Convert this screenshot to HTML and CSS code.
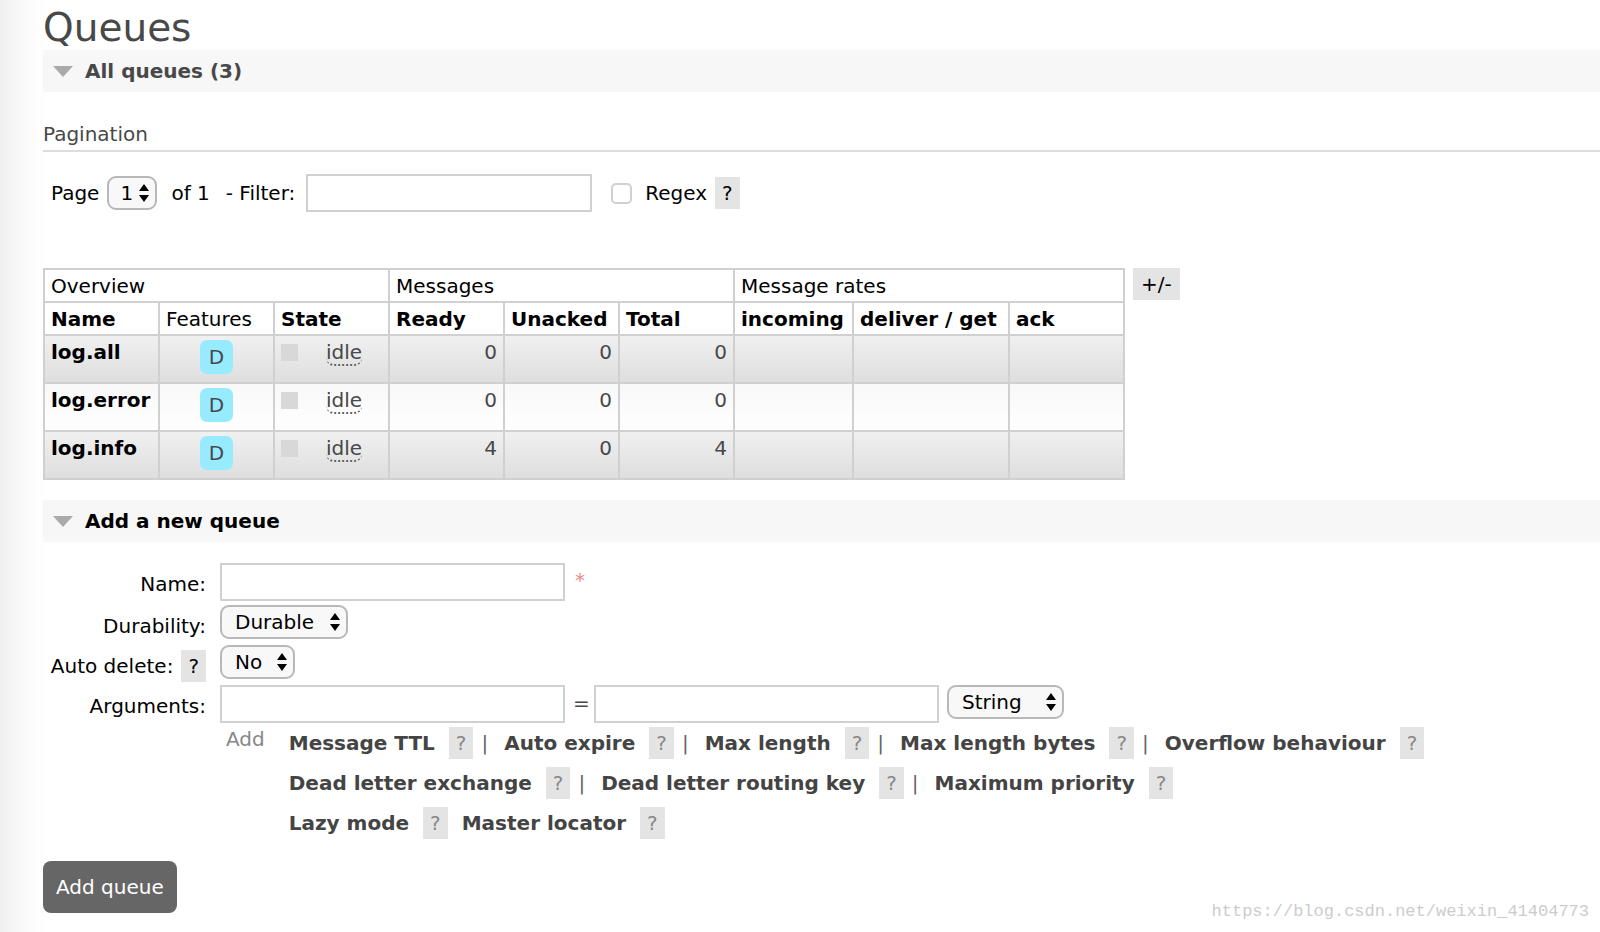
FILE: index.html
```html
<!DOCTYPE html>
<html lang="en">
	<head>
		<meta charset="utf-8">
		<title>Queues</title>
		<link rel="stylesheet" href="styles.css">
	</head>
	<body>
		<div class="main">
			<h1>Queues</h1>

			<h2 class="section"><svg class="tri" viewBox="0 0 20 11"><path d="M0 0h20L10 11z"/></svg>All queues (3)</h2>

			<h3>Pagination</h3>
			<form class="filter">
				<label for="page">Page</label>
				<span class="select page">
					<select id="page"><option>1</option></select>
					<svg class="arrows" viewBox="0 0 10 18"><path d="M5 0l5 7H0zM5 18l5-7H0z"/></svg>
				</span>
				<span class="of">of 1</span>
				<label for="filter">- Filter:</label>
				<input type="text" id="filter" class="filter-text">
				<input type="checkbox" id="regex">
				<label for="regex">Regex</label>
				<button type="button" class="help">?</button>
			</form>

			<div class="list">
				<table>
					<thead>
						<tr>
							<th colspan="3">Overview</th>
							<th colspan="3">Messages</th>
							<th colspan="3">Message rates</th>
						</tr>
						<tr>
							<th class="sort">Name</th>
							<th>Features</th>
							<th class="sort">State</th>
							<th class="sort">Ready</th>
							<th class="sort">Unacked</th>
							<th class="sort">Total</th>
							<th class="sort rate">incoming</th>
							<th class="sort deliver">deliver / get</th>
							<th class="sort">ack</th>
						</tr>
					</thead>
					<tbody>
						<tr class="alt">
							<td><a href="#">log.all</a></td>
							<td class="c"><span class="tag">D</span></td>
							<td><div class="state"><i></i><abbr>idle</abbr></div></td>
							<td class="r">0</td>
							<td class="r">0</td>
							<td class="r">0</td>
							<td></td>
							<td></td>
							<td></td>
						</tr>
						<tr>
							<td><a href="#">log.error</a></td>
							<td class="c"><span class="tag">D</span></td>
							<td><div class="state"><i></i><abbr>idle</abbr></div></td>
							<td class="r">0</td>
							<td class="r">0</td>
							<td class="r">0</td>
							<td></td>
							<td></td>
							<td></td>
						</tr>
						<tr class="alt">
							<td><a href="#">log.info</a></td>
							<td class="c"><span class="tag">D</span></td>
							<td><div class="state"><i></i><abbr>idle</abbr></div></td>
							<td class="r">4</td>
							<td class="r">0</td>
							<td class="r">4</td>
							<td></td>
							<td></td>
							<td></td>
						</tr>
					</tbody>
				</table>
				<button type="button" class="help columns">+/-</button>
			</div>

			<h2 class="section dark"><svg class="tri" viewBox="0 0 20 11"><path d="M0 0h20L10 11z"/></svg>Add a new queue</h2>

			<form class="add">
				<div class="fields">
					<div class="label"><label for="name">Name:</label></div>
					<div class="value">
						<input type="text" id="name" class="text">
						<span class="mand">*</span>
					</div>

					<div class="label"><label for="durable">Durability:</label></div>
					<div class="value">
						<span class="select durable">
							<select id="durable"><option>Durable</option><option>Transient</option></select>
							<svg class="arrows" viewBox="0 0 10 18"><path d="M5 0l5 7H0zM5 18l5-7H0z"/></svg>
						</span>
					</div>

					<div class="label"><label for="auto">Auto delete:</label><button type="button" class="help">?</button></div>
					<div class="value">
						<span class="select auto">
							<select id="auto"><option>No</option><option>Yes</option></select>
							<svg class="arrows" viewBox="0 0 10 18"><path d="M5 0l5 7H0zM5 18l5-7H0z"/></svg>
						</span>
					</div>

					<div class="label"><label for="arg">Arguments:</label></div>
					<div class="value">
						<input type="text" id="arg" class="text">
						<span class="eq">=</span>
						<input type="text" class="text" aria-label="Argument value">
						<span class="select type">
							<select aria-label="Argument type"><option>String</option><option>Number</option><option>Boolean</option><option>List</option></select>
							<svg class="arrows" viewBox="0 0 10 18"><path d="M5 0l5 7H0zM5 18l5-7H0z"/></svg>
						</span>
					</div>

					<div class="args">
						<span class="add-word">Add</span>
						<div class="lines">
							<div class="line">
								<a href="#">Message TTL</a><button type="button" class="help">?</button><b>|</b>
								<a href="#">Auto expire</a><button type="button" class="help">?</button><b>|</b>
								<a href="#">Max length</a><button type="button" class="help">?</button><b>|</b>
								<a href="#">Max length bytes</a><button type="button" class="help">?</button><b>|</b>
								<a href="#">Overflow behaviour</a><button type="button" class="help">?</button>
							</div>
							<div class="line">
								<a href="#">Dead letter exchange</a><button type="button" class="help">?</button><b>|</b>
								<a href="#">Dead letter routing key</a><button type="button" class="help">?</button><b>|</b>
								<a href="#">Maximum priority</a><button type="button" class="help">?</button>
							</div>
							<div class="line">
								<a href="#">Lazy mode</a><button type="button" class="help">?</button>
								<a href="#">Master locator</a><button type="button" class="help">?</button>
							</div>
						</div>
					</div>
				</div>
				<button type="submit" class="submit">Add queue</button>
			</form>
		</div>
		<div class="mark">https://blog.csdn.net/weixin_41404773</div>
	</body>
</html>
```
FILE: styles.css
```css
*{
	box-sizing: border-box;
	margin: 0;
	padding: 0;
}
body{
	min-height: 100vh;
	font: 20px/24px "DejaVu Sans", Verdana, sans-serif;
	color: #484848;
	background: linear-gradient(to right, #efefef, #fafafa 24px, #fff 48px);
}
.main{
	padding: 6px 0 0 43px;
}
h1{
	font-size: 39px;
	font-weight: normal;
	line-height: 44px;
}
.section{
	display: flex;
	align-items: center;
	height: 42px;
	padding-left: 10px;
	gap: 12px;
	font-size: 20px;
	background: #f7f7f7;
}
.tri{
	width: 20px;
	height: 11px;
	fill: #aaa;
}
.dark{
	margin-top: 20px;
	color: #000;
}
h3{
	margin-top: 30px;
	padding-bottom: 4px;
	font-size: 20px;
	font-weight: normal;
	border-bottom: 2px solid #ddd;
}
input, select, button{
	font: inherit;
	color: #000;
}
input[type=text]{
	height: 38px;
	padding: 0 6px;
	border: 2px solid #d0d0d0;
	background: #fff;
}
.filter{
	display: flex;
	align-items: center;
	margin-top: 22px;
	padding-left: 8px;
	gap: 8px;
	color: #000;
}
.of{
	margin: 0 8px 0 6px;
}
.filter .filter-text{
	width: 286px;
	margin-left: 3px;
}
input[type=checkbox]{
	appearance: none;
	width: 21px;
	height: 21px;
	margin: 0 5px 0 11px;
	border: 2px solid #d0d0d0;
	border-radius: 5px;
	background: #fff;
}
.select{
	display: grid;
	height: 34px;
}
.select select{
	grid-area: 1 / 1;
	appearance: none;
	padding-left: 13px;
	border: 2px solid #b8b8b8;
	border-radius: 9px;
	background: #f8f8f8;
}
.arrows{
	grid-area: 1 / 1;
	align-self: center;
	justify-self: end;
	width: 10px;
	height: 18px;
	margin-right: 8px;
	pointer-events: none;
}
.page{
	width: 50px;
}
.page select{
	padding-left: 11px;
}
.durable{
	width: 128px;
}
.auto{
	width: 75px;
}
.type{
	width: 117px;
}
.help{
	flex: none;
	height: 32px;
	padding: 0 7px;
	border: 0;
	background: #e4e4e4;
}
.columns{
	padding: 0 8px;
}
.list{
	display: flex;
	align-items: flex-start;
	gap: 8px;
	margin-top: 56px;
}
table{
	border-collapse: collapse;
	color: #484848;
}
th, td{
	min-width: 115px;
	width: 115px;
	padding: 4px 6px;
	border: 2px solid #d0d0d0;
	text-align: left;
	vertical-align: top;
}
th{
	height: 33px;
	padding-bottom: 3px;
	font-weight: normal;
	color: #000;
	background: #fff;
}
.sort{
	font-weight: bold;
}
.rate{
	width: 119px;
}
.deliver{
	width: 156px;
}
td{
	height: 48px;
	background: linear-gradient(#f8f8f8, #fff);
}
.alt td{
	background: linear-gradient(#f0f0f0, #dedede);
}
td a{
	font-weight: bold;
	color: #000;
	text-decoration: none;
}
.c{
	text-align: center;
}
.r{
	text-align: right;
}
.tag{
	display: inline-block;
	padding: 5px 9px;
	border-radius: 7px;
	background: #98ebff;
}
.state{
	display: flex;
	align-items: flex-start;
	gap: 28px;
}
.state i{
	width: 17px;
	height: 17px;
	margin-top: 4px;
	background: #d8d8d8;
}
.state abbr{
	border-bottom: 2px dotted #666;
	border-radius: 8px;
}
.add{
	padding-top: 21px;
}
.fields{
	display: grid;
	grid-template-columns: 163px 1fr;
	gap: 4px 14px;
}
.label{
	display: flex;
	justify-content: flex-end;
	align-items: center;
	align-self: start;
	height: 30px;
	margin-top: 6px;
	gap: 8px;
	color: #000;
}
.value{
	display: flex;
	align-items: flex-start;
	gap: 8px;
}
.text{
	width: 345px;
}
.mand{
	padding: 5px 0 0 2px;
	color: #e88;
}
.eq{
	width: 13px;
	padding-top: 6px;
	text-align: center;
}
.args{
	grid-column: 2;
	display: flex;
	gap: 24px;
	padding-left: 6px;
}
.add-word{
	color: #888;
}
.lines{
	display: grid;
	gap: 8px;
}
.line{
	display: flex;
	align-items: center;
	gap: 14px;
}
.line a{
	font-weight: bold;
	color: #444;
	text-decoration: none;
}
.line b{
	margin: 0 2px 0 -6px;
	font-weight: normal;
	color: #666;
}
.line .help{
	color: #888;
}
.submit{
	height: 52px;
	margin-top: 22px;
	padding: 0 13px;
	border: 0;
	border-radius: 8px;
	color: #fff;
	background: #666;
}
.mark{
	position: absolute;
	right: 11px;
	bottom: 8px;
	font: 17px/24px "Liberation Mono", monospace;
	color: #ccc;
}
```
